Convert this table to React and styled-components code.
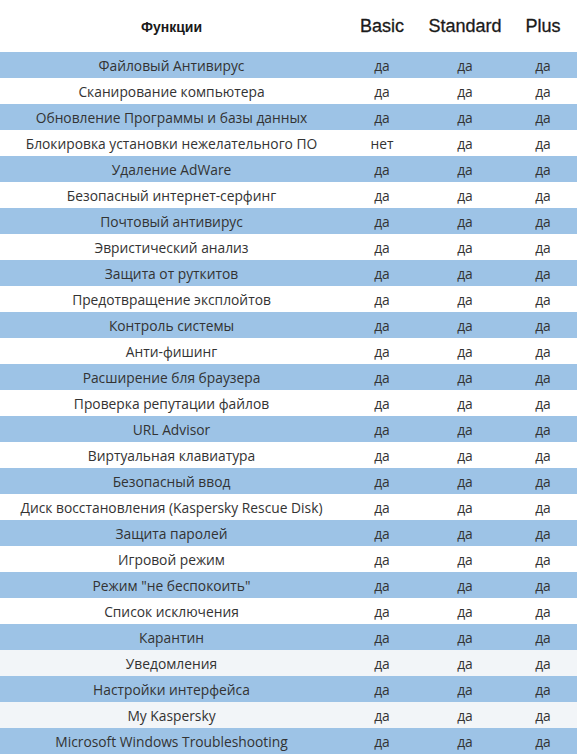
import React from "react";
import styled, { createGlobalStyle } from "styled-components";

const Global = createGlobalStyle`
  html, body { margin: 0; padding: 0; background: #ffffff; }
  body { font-family: "Open Sans", "Noto Sans", sans-serif; }
`;

const Table = styled.div`
  width: 577px;
  display: flex;
  flex-direction: column;
`;

const Row = styled.div`
  display: grid;
  grid-template-columns: 343px 78px 88px 68px;
  align-items: center;
  height: ${(p) => (p.$header ? "52px" : "26px")};
  background: ${(p) =>
    p.$tone === "blue" ? "#9dc3e6" : p.$tone === "light" ? "#f2f5f8" : "#ffffff"};
`;

const HeadCell = styled.div`
  text-align: center;
  font-family: "Liberation Sans", Arial, sans-serif;
  font-size: ${(p) => (p.$bold ? "14px" : "18px")};
  font-weight: ${(p) => (p.$bold ? 700 : 400)};
  color: #1a1a1a;
  padding-top: 1px;
  -webkit-text-stroke: ${(p) => (p.$bold ? "0" : "0.3px #1a1a1a")};
`;

const Cell = styled.div`
  text-align: center;
  font-size: 13.8px;
  color: #333333;
  white-space: nowrap;
  line-height: 24px;
  padding-top: 2px;
`;

const rows = [
  ["Файловый Антивирус", "да"],
  ["Сканирование компьютера", "да"],
  ["Обновление Программы и базы данных", "да"],
  ["Блокировка установки нежелательного ПО", "нет"],
  ["Удаление AdWare", "да"],
  ["Безопасный интернет-серфинг", "да"],
  ["Почтовый антивирус", "да"],
  ["Эвристический анализ", "да"],
  ["Защита от руткитов", "да"],
  ["Предотвращение эксплойтов", "да"],
  ["Контроль системы", "да"],
  ["Анти-фишинг", "да"],
  ["Расширение бля браузера", "да"],
  ["Проверка репутации файлов", "да"],
  ["URL Advisor", "да"],
  ["Виртуальная клавиатура", "да"],
  ["Безопасный ввод", "да"],
  ["Диск восстановления (Kaspersky Rescue Disk)", "да"],
  ["Защита паролей", "да"],
  ["Игровой режим", "да"],
  ["Режим \"не беспокоить\"", "да"],
  ["Список исключения", "да"],
  ["Карантин", "да"],
  ["Уведомления", "да"],
  ["Настройки интерфейса", "да"],
  ["My Kaspersky", "да"],
  ["Microsoft Windows Troubleshooting", "да"],
];

const toneFor = (i) => {
  if (i % 2 === 0) return "blue";
  return i >= 23 ? "light" : "white";
};

export default function App() {
  return (
    <>
      <Global />
      <Table>
        <Row $header>
          <HeadCell $bold>Функции</HeadCell>
          <HeadCell>Basic</HeadCell>
          <HeadCell>Standard</HeadCell>
          <HeadCell>Plus</HeadCell>
        </Row>
        {rows.map(([name, basic], i) => (
          <Row key={name} $tone={toneFor(i)}>
            <Cell>{name}</Cell>
            <Cell>{basic}</Cell>
            <Cell>да</Cell>
            <Cell>да</Cell>
          </Row>
        ))}
      </Table>
    </>
  );
}
